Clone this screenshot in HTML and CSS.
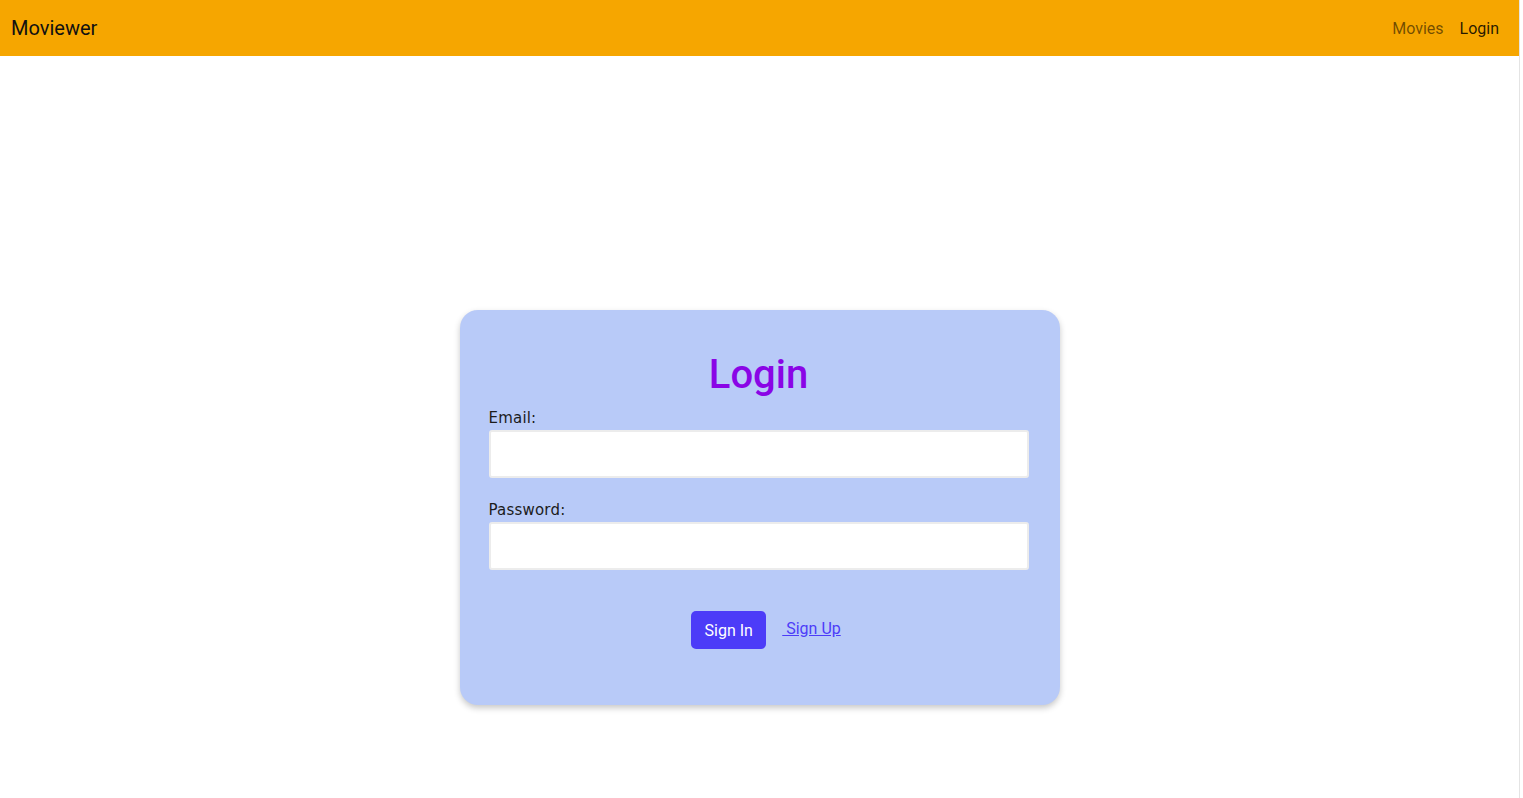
FILE: index.html
```html
<!DOCTYPE html>
<html lang="en">

<head>
    <meta charset="UTF-8">
    <title>Moviewer</title>
    <link rel="stylesheet" href="styles.css">
</head>

<body>
    <div class="page">
        <nav class="navbar">
            <a class="brand" href="#">Moviewer</a>
            <ul class="nav-links">
                <li><a href="#">Movies</a></li>
                <li><a class="active" href="#">Login</a></li>
            </ul>
        </nav>

        <div class="content">
            <form class="login-card">
                <h1>Login</h1>
                <label for="email">Email:</label>
                <input type="email" id="email">
                <label for="password">Password:</label>
                <input type="password" id="password">
                <div class="actions">
                    <button type="button" class="btn">Sign In</button>
                    <a class="signup" href="#"> Sign Up</a>
                </div>
            </form>
        </div>
    </div>
</body>

</html>
```

FILE: styles.css
```css
* {
    margin: 0;
    padding: 0;
    box-sizing: border-box;
    list-style: none;
}

html,
body {
    height: 100%;
}

body {
    font-family: Roboto, "Noto Sans", sans-serif;
    background: #fff;
    color: #212529;
}

.page {
    width: 1520px;
    min-height: 100%;
    border-right: 1px solid #e4e4e4;
}

.navbar {
    height: 56px;
    background: #f6a600;
    display: flex;
    align-items: center;
    justify-content: space-between;
    padding: 0 20px 0 11px;
}

.brand {
    font-size: 20px;
    color: #111;
    text-decoration: none;
}

.nav-links {
    display: flex;
    gap: 16px;
}

.nav-links a {
    font-size: 16px;
    color: rgba(0, 0, 0, 0.55);
    text-decoration: none;
}

.nav-links a.active {
    color: rgba(0, 0, 0, 0.85);
}

.content {
    display: flex;
    justify-content: center;
    padding-top: 254px;
}

.login-card {
    width: 600px;
    height: 395px;
    background: #b8caf8;
    border-radius: 18px;
    box-shadow: 0 3px 6px rgba(0, 0, 0, 0.22);
    padding: 39px 31px 0 29px;
    display: flex;
    flex-direction: column;
}

.login-card h1 {
    font-size: 40px;
    font-weight: 500;
    line-height: 52px;
    text-align: center;
    color: #8a05e6;
    margin-bottom: 7px;
}

.login-card label {
    font-family: "DejaVu Sans", sans-serif;
    font-size: 15px;
    letter-spacing: 0.2px;
    line-height: 20px;
    color: #1c1c1c;
    margin-bottom: 2px;
}

.login-card input {
    width: 540px;
    height: 48px;
    border: 2px solid #ececec;
    border-radius: 3px;
    background: #fff;
    margin-bottom: 22px;
    font-size: 16px;
    padding: 0 8px;
}

.actions {
    display: flex;
    justify-content: center;
    align-items: center;
    gap: 16px;
    margin-top: 19px;
    padding-left: 15px;
}

.btn {
    font-family: Roboto, "Noto Sans", sans-serif;
    font-size: 16px;
    color: #fff;
    background: #4c3cf8;
    border: none;
    border-radius: 5px;
    width: 75px;
    height: 38px;
    cursor: pointer;
}

.signup {
    font-size: 16px;
    color: #4c3cf8;
    white-space: pre;
    margin-bottom: 3px;
}
```
